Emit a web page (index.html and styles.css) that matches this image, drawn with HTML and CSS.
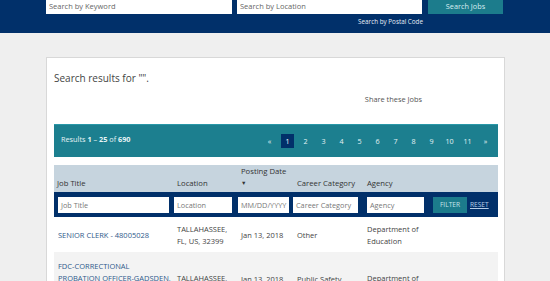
FILE: index.html
```html
<!DOCTYPE html>
<html>
<head>
<meta charset="utf-8">
<link rel="stylesheet" href="styles.css">
</head>
<body>
<header class="top">
  <div class="top-inner">
    <div class="search-row">
      <div class="field kw">Search by Keyword</div>
      <div class="field loc">Search by Location</div>
      <div class="btn-search">Search Jobs</div>
    </div>
    <div class="postal-row">Search by Postal Code</div>
  </div>
</header>
<main class="page">
  <section class="card">
    <h1 class="results-title">Search results for "".</h1>
    <div class="share-row">Share these Jobs</div>
    <div class="pager-bar">
      <div class="count">Results <b>1</b> – <b>25</b> of <b>690</b></div>
      <ul class="pager">
        <li>«</li>
        <li class="active">1</li>
        <li>2</li><li>3</li><li>4</li><li>5</li><li>6</li><li>7</li><li>8</li><li>9</li><li>10</li><li>11</li>
        <li>»</li>
      </ul>
    </div>
    <table class="jobs">
      <colgroup>
        <col class="c1"><col class="c2"><col class="c3"><col class="c4"><col class="c5"><col class="c6">
      </colgroup>
      <thead>
        <tr class="head">
          <th>Job Title</th>
          <th>Location</th>
          <th>Posting Date<br><span class="arrow">▼</span></th>
          <th class="cc">Career Category</th>
          <th>Agency</th>
          <th></th>
        </tr>
        <tr class="filters">
          <td><div class="finput w1">Job Title</div></td>
          <td><div class="finput w2">Location</div></td>
          <td><div class="finput w3">MM/DD/YYYY</div></td>
          <td><div class="finput w4">Career Category</div></td>
          <td><div class="finput w5">Agency</div></td>
          <td class="actions"><span class="btn-filter">FILTER</span><span class="reset">RESET</span></td>
        </tr>
      </thead>
      <tbody>
        <tr class="row">
          <td><span class="link">SENIOR CLERK - 48005028</span></td>
          <td>TALLAHASSEE,<br>FL, US, 32399</td>
          <td>Jan 13, 2018</td>
          <td class="cc">Other</td>
          <td>Department of<br>Education</td>
          <td></td>
        </tr>
        <tr class="row alt">
          <td><span class="link">FDC-CORRECTIONAL<br>PROBATION OFFICER-GADSDEN,</span></td>
          <td><br>TALLAHASSEE,</td>
          <td class="low">Jan 13, 2018</td>
          <td class="low cc">Public Safety</td>
          <td><br>Department of</td>
          <td></td>
        </tr>
      </tbody>
    </table>
  </section>
</main>
</body>
</html>
```

FILE: styles.css
```css
* { box-sizing: border-box; }
html, body { margin: 0; padding: 0; }
body {
  font-family: "Open Sans", "Liberation Sans", sans-serif;
  background: #efefef;
  color: #444;
  width: 550px;
  height: 281px;
  overflow: hidden;
}
.top {
  background: #01306a;
  height: 33px;
}
.top-inner {
  margin-left: 46px;
  width: 457px;
}
.search-row {
  display: flex;
  gap: 5px;
  font-size: 7.5px;
}
.field {
  background: #fff;
  height: 14px;
  line-height: 13px;
  color: #666;
  padding-left: 3px;
}
.kw { width: 186px; }
.loc { width: 185px; }
.btn-search {
  margin-left: 1px;
  width: 75px;
  height: 14px;
  background: #1c7c8c;
  color: #d8eef1;
  font-size: 7.3px;
  line-height: 13px;
  text-align: center;
}
.postal-row {
  width: 377px;
  text-align: right;
  margin-top: 4px;
  font-size: 6.3px;
  line-height: 8px;
  color: #e6ecf4;
}
.page {
  padding-top: 24px;
}
.card {
  margin-left: 46px;
  width: 459px;
  height: 240px;
  background: #fff;
  border: 1px solid #d8d8d8;
  padding: 13px 6px 0 7px;
}
.results-title {
  margin: 0;
  font-size: 10px;
  font-weight: 400;
  color: #444;
  line-height: 14px;
}
.share-row {
  padding: 9px 0 20px 0;
  line-height: 10px;
  font-size: 7.4px;
  width: 368px;
  text-align: right;
  color: #555;
}
.pager-bar {
  background: #1c7f8f;
  height: 33px;
  border-top: 1px solid #2a98a8;
  display: flex;
  align-items: center;
  justify-content: space-between;
  padding: 0 6px 0 7px;
}
.count {
  font-size: 7.3px;
  line-height: 10px;
  color: #e8f4f6;
  padding-bottom: 4px;
}
.count b { font-weight: 700; }
.pager {
  list-style: none;
  margin: 0;
  padding: 0;
  display: flex;
  align-items: center;
  gap: 5px;
  font-size: 7.2px;
}
.pager li {
  color: #e4f2f4;
  min-width: 13px;
  height: 14px;
  line-height: 14px;
  text-align: center;
}
.pager li.active {
  background: #01306a;
  color: #fff;
}
.jobs {
  margin-top: 8px;
  width: 444px;
  border-collapse: collapse;
  table-layout: fixed;
}
.c1 { width: 120px; }
.c2 { width: 64px; }
.c3 { width: 55px; }
.c4 { width: 71px; }
.c5 { width: 66px; }
.c6 { width: 68px; }
.head {
  background: #c6d4de;
  height: 27px;
}
.head th {
  font-size: 7.7px;
  font-weight: 400;
  color: #333;
  text-align: left;
  vertical-align: bottom;
  padding: 0 2px 3px 3px;
  line-height: 11px;
  white-space: nowrap;
}
.head th.cc { padding-left: 4px; }
.arrow { font-size: 5.5px; }
.filters {
  background: #01306a;
  height: 25px;
}
.filters td {
  padding: 0;
  vertical-align: middle;
}
.finput {
  background: #fff;
  height: 16px;
  font-size: 7.3px;
  line-height: 16px;
  color: #777;
  padding-left: 3px;
  white-space: nowrap;
  overflow: hidden;
}
.w1 { width: 111px; margin-left: 4px; }
.w2 { width: 58px; }
.w3 { width: 51px; }
.w4 { width: 65px; }
.w5 { width: 57px; margin-left: 3px; }
.actions { white-space: nowrap; font-size: 6.6px; }
.btn-filter {
  display: inline-block;
  background: #1c7c8c;
  color: #c6e4ea;
  height: 16px;
  line-height: 16px;
  width: 34px;
  text-align: center;
  margin-left: 3px;
  vertical-align: middle;
}
.reset {
  color: #b8cfe8;
  text-decoration: underline;
  margin-left: 3px;
  vertical-align: middle;
}
.row td {
  font-size: 7.5px;
  color: #444;
  line-height: 12px;
  padding: 4px 2px 4px 3px;
  vertical-align: middle;
}
.row td:first-child { padding-left: 4px; }
.row td.cc { padding-left: 4px; }
.row { height: 35px; }
.row.alt { background: #f3f3f3; }
.row.alt td { vertical-align: top; padding-top: 8px; }
.row.alt td.low { padding-top: 21px; }
.link { color: #2f5a8b; }
```
